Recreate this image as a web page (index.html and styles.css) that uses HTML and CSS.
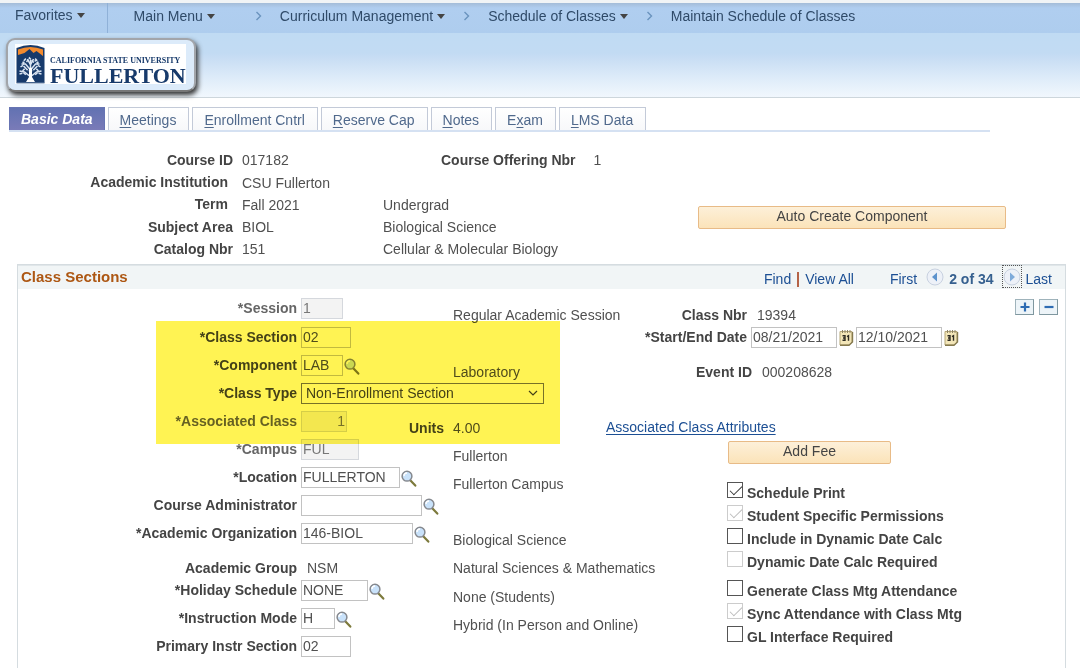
FILE: index.html
```html
<!DOCTYPE html>
<html lang="en">
<head>
    <meta charset="UTF-8">
    <title>Maintain Schedule of Classes</title>
    <link rel="stylesheet" href="styles.css">
</head>
<body>

<!-- shared icons -->
<svg class="icon-defs" width="0" height="0">
    <symbol id="icon-lookup" viewBox="0 0 16 17">
        <path d="M9.5 10.5 14.3 15.6" stroke="#7d7a3c" stroke-width="2.2" stroke-linecap="round"/>
        <circle cx="6" cy="6.2" r="4.9" fill="#c9e2fa" stroke="#85888e" stroke-width="1.5"/>
        <path d="M3 6a3 3 0 0 1 3-3" fill="none" stroke="#fff" stroke-width="1.4"/>
    </symbol>
    <symbol id="icon-calendar" viewBox="0 0 15 17">
        <path d="M1 2.500h12v10.500L10 16H1z" fill="#f3e6b8" stroke="#b5a677"/>
        <path d="M13.500 3v10L10 16.300H1" fill="none" stroke="#85794e" stroke-width="1.400"/>
        <path d="M3.500 1v3M6 1v3M8.500 1v3M11 1v3" stroke="#8d8466"/>
        <path d="M3.500 6.700h2.500v4.600h-2.500M4 9h2M8 7.700l1.500-1v5" fill="none" stroke="#2e2b22" stroke-width="1.400"/>
    </symbol>
    <symbol id="icon-sep" viewBox="0 0 7 10">
        <path d="M1.5 1 5.5 5 1.5 9" fill="none" stroke="#6a93be" stroke-width="1.4"/>
    </symbol>
</svg>

<nav class="breadcrumb">
    <a class="crumb favorites has-menu" href="#">Favorites</a>
    <a class="crumb main-menu has-menu" href="#">Main Menu</a>
    <svg class="sep"><use href="#icon-sep"/></svg>
    <a class="crumb has-menu" href="#">Curriculum Management</a>
    <svg class="sep"><use href="#icon-sep"/></svg>
    <a class="crumb has-menu" href="#">Schedule of Classes</a>
    <svg class="sep"><use href="#icon-sep"/></svg>
    <a class="crumb" href="#">Maintain Schedule of Classes</a>
</nav>

<header class="banner">
    <a class="logo" href="#">
        <span class="logo-inner">
            <svg class="logo-mark" viewBox="0 0 30 40">
                <path d="M1 4Q15-2 29 4v35H1z" fill="#173a6b"/>
                <path d="M2.500 5.500Q15 .5 27.500 5.500V12L21 7l-3 2-4-4-5 4-6.500 2z" fill="#f28a2e"/>
                <g fill="none" stroke="#dbe5f2" stroke-width="1.500">
                    <path d="M15 37V16M14 32l-5-4-5-1M16 32l5-4 5-1M15 26l-5-6-4 0M15 26l5-6 4 0M15 21l-3-6M15 21l3-6"/>
                    <path d="M5 23l3-2 0-4 3-3M7 27l3-3-3-3M11 18l3-4 4 4 3-2M25 23l-3-2 0-4-3-3M23 27l-3-3 3-3M4 30l4-1 3 2M26 30l-4-1-3 2M10 24l3 3M20 24l-3 3M7 18l2 1M23 18l-2 1" stroke-dasharray="3 1"/>
                </g>
                <path d="M13.500 24h3v9l3 5h-9l3-5z" fill="#fff"/>
                <path d="M1 39h28" stroke="#6c86aa"/>
            </svg>
            <span class="logo-text">
                <span class="logo-small">CALIFORNIA STATE UNIVERSITY</span>
                <span class="logo-big">FULLERTON</span>
            </span>
        </span>
    </a>
</header>

<nav class="tabs">
    <a class="tab active" href="#">Basic Data</a>
    <a class="tab" href="#"><u>M</u>eetings</a>
    <a class="tab" href="#"><u>E</u>nrollment Cntrl</a>
    <a class="tab" href="#"><u>R</u>eserve Cap</a>
    <a class="tab" href="#"><u>N</u>otes</a>
    <a class="tab" href="#">E<u>x</u>am</a>
    <a class="tab" href="#"><u>L</u>MS Data</a>
</nav>

<section class="course">
    <dl class="course-info">
        <dt>Course ID</dt>
        <dd>017182</dd>
        <dd class="offering"><b>Course Offering Nbr</b> <span>1</span></dd>
        <dt class="indent">Academic Institution</dt>
        <dd>CSU Fullerton</dd>
        <dd></dd>
        <dt class="indent">Term</dt>
        <dd>Fall 2021</dd>
        <dd>Undergrad</dd>
        <dt>Subject Area</dt>
        <dd>BIOL</dd>
        <dd>Biological Science</dd>
        <dt>Catalog Nbr</dt>
        <dd>151</dd>
        <dd>Cellular &amp; Molecular Biology</dd>
    </dl>
    <button type="button" class="btn btn-wide">Auto Create Component</button>
</section>

<section class="panel">
    <div class="panel-header">
        <h2>Class Sections</h2>
        <div class="pager">
            <a href="#">Find</a>
            <span class="bar"></span>
            <a href="#">View All</a>
            <a class="first" href="#">First</a>
            <button type="button" class="page-btn" aria-label="Previous">
                <svg viewBox="0 0 18 18"><circle cx="9" cy="9" r="8" fill="#edf1f8" stroke="#c8d1e0"/><path d="M11 4.500v9L6 9z" fill="#5d93cd"/></svg>
            </button>
            <b>2 of 34</b>
            <button type="button" class="page-btn focused" aria-label="Next">
                <svg viewBox="0 0 18 18"><circle cx="9" cy="9" r="8" fill="#edf1f8" stroke="#c8d1e0"/><path d="M7 4.500v9L12 9z" fill="#7fabda"/></svg>
            </button>
            <a href="#">Last</a>
        </div>
    </div>

    <form class="panel-body">
        <div class="fields">
            <div class="field">
                <label class="dim" for="session">*Session</label>
                <div class="control"><input type="text" id="session" class="w-s" value="1" disabled></div>
                <span class="desc">Regular Academic Session</span>
            </div>
            <div class="highlight">
                <div class="field">
                    <label for="class-section">*Class Section</label>
                    <div class="control"><input type="text" id="class-section" class="w-m" value="02"></div>
                </div>
                <div class="field">
                    <label for="component">*Component</label>
                    <div class="control">
                        <input type="text" id="component" class="w-s" value="LAB">
                        <button type="button" class="lookup" aria-label="Look up component"><svg><use href="#icon-lookup"/></svg></button>
                    </div>
                    <span class="desc">Laboratory</span>
                </div>
                <div class="field">
                    <label for="class-type">*Class Type</label>
                    <div class="control">
                        <div class="select-wrap">
                            <select id="class-type">
                                <option>Non-Enrollment Section</option>
                                <option>Enrollment Section</option>
                            </select>
                            <svg class="chevron" viewBox="0 0 10 6"><path d="M1 1l4 4 4-4" fill="none" stroke="#444" stroke-width="1.2"/></svg>
                        </div>
                    </div>
                </div>
                <div class="field">
                    <label class="dim" for="assoc-class">*Associated Class</label>
                    <div class="control"><input type="text" id="assoc-class" class="w-a num" value="1" disabled><b class="units">Units</b></div>
                    <span class="desc">4.00</span>
                </div>
            </div>
            <div class="field">
                <label class="dim" for="campus">*Campus</label>
                <div class="control"><input type="text" id="campus" class="w-l" value="FUL" disabled></div>
                <span class="desc">Fullerton</span>
            </div>
            <div class="field">
                <label for="location">*Location</label>
                <div class="control">
                    <input type="text" id="location" class="w-xl" value="FULLERTON">
                    <button type="button" class="lookup" aria-label="Look up location"><svg><use href="#icon-lookup"/></svg></button>
                </div>
                <span class="desc">Fullerton Campus</span>
            </div>
            <div class="field">
                <label for="course-admin">Course Administrator</label>
                <div class="control">
                    <input type="text" id="course-admin" class="w-3xl">
                    <button type="button" class="lookup" aria-label="Look up administrator"><svg><use href="#icon-lookup"/></svg></button>
                </div>
            </div>
            <div class="field">
                <label for="acad-org">*Academic Organization</label>
                <div class="control">
                    <input type="text" id="acad-org" class="w-2xl" value="146-BIOL">
                    <button type="button" class="lookup" aria-label="Look up organization"><svg><use href="#icon-lookup"/></svg></button>
                </div>
                <span class="desc">Biological Science</span>
            </div>
            <div class="field plain">
                <b>Academic Group</b>
                <span class="value">NSM</span>
                <span class="desc">Natural Sciences &amp; Mathematics</span>
            </div>
            <div class="field">
                <label for="holiday">*Holiday Schedule</label>
                <div class="control">
                    <input type="text" id="holiday" class="w-h" value="NONE">
                    <button type="button" class="lookup" aria-label="Look up holiday schedule"><svg><use href="#icon-lookup"/></svg></button>
                </div>
                <span class="desc">None (Students)</span>
            </div>
            <div class="field">
                <label for="mode">*Instruction Mode</label>
                <div class="control">
                    <input type="text" id="mode" class="w-xs" value="H">
                    <button type="button" class="lookup" aria-label="Look up instruction mode"><svg><use href="#icon-lookup"/></svg></button>
                </div>
                <span class="desc">Hybrid (In Person and Online)</span>
            </div>
            <div class="field">
                <label for="primary-section">Primary Instr Section</label>
                <div class="control"><input type="text" id="primary-section" class="w-m" value="02"></div>
            </div>
        </div>

        <div class="side">
            <div class="side-row class-nbr">
                <b>Class Nbr</b>
                <span class="value">19394</span>
                <span class="row-actions">
                    <button type="button" aria-label="Add row"><svg viewBox="0 0 12 12"><path d="M6 1.500v9M1.500 6h9" stroke="#2e6cb3" stroke-width="2.200"/></svg></button>
                    <button type="button" aria-label="Delete row"><svg viewBox="0 0 12 12"><path d="M1.500 6h9" stroke="#2e6cb3" stroke-width="2.200"/></svg></button>
                </span>
            </div>
            <div class="side-row dates">
                <label for="start-date">*Start/End Date</label>
                <span class="date-inputs">
                    <input type="text" id="start-date" value="08/21/2021">
                    <button type="button" class="cal" aria-label="Choose start date"><svg><use href="#icon-calendar"/></svg></button>
                    <input type="text" id="end-date" value="12/10/2021" aria-label="End date">
                    <button type="button" class="cal" aria-label="Choose end date"><svg><use href="#icon-calendar"/></svg></button>
                </span>
            </div>
            <div class="side-row event">
                <b>Event ID</b>
                <span class="value">000208628</span>
            </div>
            <a class="attributes" href="#">Associated Class Attributes</a>
            <div class="options">
                <button type="button" class="btn btn-fee">Add Fee</button>
                <div class="checks">
                    <label><input type="checkbox" checked>Schedule Print</label>
                    <label><input type="checkbox" checked disabled>Student Specific Permissions</label>
                    <label><input type="checkbox">Include in Dynamic Date Calc</label>
                    <label><input type="checkbox" disabled>Dynamic Date Calc Required</label>
                </div>
                <div class="checks">
                    <label><input type="checkbox">Generate Class Mtg Attendance</label>
                    <label><input type="checkbox" checked disabled>Sync Attendance with Class Mtg</label>
                    <label><input type="checkbox">GL Interface Required</label>
                </div>
            </div>
        </div>
    </form>
</section>

</body>
</html>
```
FILE: styles.css
```css
* {
    box-sizing: border-box;
}
body {
    margin: 0;
    background: #fff;
    color: #505050;
    font-family: "Liberation Sans", Arial, sans-serif;
    font-size: 14px;
    line-height: 16px;
}
b, label, dt {
    color: #444;
    font-weight: bold;
}
a {
    color: #1c4f94;
    text-decoration: none;
}
button {
    font: inherit;
    padding: 0;
}
.icon-defs {
    position: absolute;
}

/* breadcrumb bar */
.breadcrumb {
    display: flex;
    align-items: center;
    height: 33px;
    padding-bottom: 5px;
    border-top: 3px solid #f1f4f6;
    background: linear-gradient(#a4bcd8, #b0cef0 5px, #aecdee);
    white-space: nowrap;
}
.crumb {
    color: #2f4a68;
}
.has-menu::after {
    content: "";
    display: inline-block;
    margin-left: 4px;
    vertical-align: 2px;
    border: 4px solid transparent;
    border-top: 5px solid #444;
    border-bottom: 0;
}
.favorites {
    align-self: stretch;
    margin-bottom: -5px;
    padding: 4px 22px 0 15px;
    border-right: 1px solid #8fb1d8;
}
.main-menu {
    margin: 0 22px 0 26px;
}
.sep {
    width: 7px;
    height: 10px;
    margin: 0 18px;
}

/* banner with logo */
.banner {
    height: 65px;
    padding: 5px 6px;
    border-bottom: 1px solid #cdd6dc;
    background: linear-gradient(#c0dbf3, #c2dbf3 20px, #c9def4 26px, #e3effa 50px, #f1f7fd);
}
.logo {
    display: inline-block;
    padding: 4px 8px 6px 7px;
    border: 2px solid #a2a5aa;
    border-bottom-color: #777;
    border-radius: 9px;
    background: #dcebfa;
    box-shadow: 2px 3px 5px #333;
}
.logo-inner {
    display: flex;
    width: 171px;
    height: 40px;
    background: #fff;
}
.logo-mark {
    width: 31px;
    height: 40px;
}
.logo-text {
    display: flex;
    flex-direction: column;
    margin-left: 4px;
    color: #173a6b;
    font-family: "Liberation Serif", serif;
    font-weight: bold;
    white-space: nowrap;
}
.logo-small {
    padding-top: 12px;
    font-size: 8px;
    line-height: 10px;
}
.logo-big {
    font-size: 22px;
    line-height: 20px;
}

/* tabs */
.tabs {
    display: flex;
    gap: 3px;
    margin: 9px 90px 0 9px;
    border-bottom: 2px solid #d5e1f2;
}
.tab {
    height: 23px;
    padding: 3px 12px 0 11px;
    border: 1px solid #c3cad8;
    border-bottom: 0;
    background: linear-gradient(#fff, #f7f8fa);
    color: #50698c;
    line-height: 18px;
}
.tab.active {
    padding: 2px 11px 0;
    border-color: #6774b3;
    background: linear-gradient(#6272b2, #7a7bb8);
    color: #fff;
    font-style: italic;
    font-weight: bold;
}
.tab u {
    text-underline-offset: 2px;
}

/* course summary */
.course {
    display: flex;
    height: 132px;
    padding: 17px 9px 0 0;
}
.course-info {
    display: grid;
    grid-template-columns: 233px 141px 1fr;
    grid-template-rows: 23px;
    grid-auto-rows: 22px;
    flex: 1;
    margin: 0;
    line-height: 22px;
}
.course-info dt {
    text-align: right;
}
.course-info .indent {
    margin-top: -1px;
    padding-right: 5px;
}
.course-info dd {
    margin: 0 0 0 9px;
}
.course-info .offering {
    padding-left: 58px;
}
.offering span {
    margin-left: 14px;
}
.btn {
    height: 23px;
    padding-bottom: 3px;
    border: 1px solid #e8bb87;
    border-radius: 2px;
    background: linear-gradient(#fdf0d9, #fbe3b9);
    color: #444;
}
.btn-wide {
    width: 308px;
    margin: 57px 65px 0 0;
}

/* class sections */
.panel {
    margin: 0 14px 0 17px;
    border: 1px solid #d5dce0;
    border-bottom: 0;
}
.panel-header {
    display: flex;
    align-items: center;
    justify-content: space-between;
    height: 24px;
    padding: 0 13px 0 3px;
    border-top: 1px solid #e0e6e9;
    background: #f1f5f6;
}
.panel-header h2 {
    margin: 0 0 2px;
    color: #ad5713;
    font-size: 15px;
}
.pager {
    display: flex;
    align-items: center;
    padding-top: 3px;
}
.pager b {
    margin: 0 8px 0 5px;
    color: #36608f;
}
.bar {
    width: 2px;
    height: 15px;
    margin: 0 6px;
    background: #b56347;
}
.first {
    margin: 0 9px 0 36px;
}
.page-btn {
    width: 18px;
    height: 23px;
    margin-top: -5px;
    border: 0;
    background: none;
}
.page-btn svg {
    display: block;
    width: 18px;
    height: 18px;
}
.page-btn.focused {
    width: 20px;
    margin-right: 4px;
    border: 1px dotted #555;
}
.panel-body {
    display: grid;
    grid-template-columns: 588px 1fr;
    padding-bottom: 12px;
}

.field {
    display: grid;
    grid-template-columns: 279px 156px 1fr;
    height: 28px;
    padding-top: 4px;
    white-space: nowrap;
}
.field:first-child {
    padding-top: 0;
}
.fields {
    padding-top: 9px;
}
.fields > .field:first-child {
    height: 25px;
}
.field label {
    text-align: right;
    padding-top: 2px;
}
.dim {
    color: #666;
}
.control {
    display: flex;
    align-items: flex-start;
    padding-left: 4px;
}
.desc {
    padding-top: 9px;
}
input[type="text"] {
    height: 21px;
    padding: 0 1px 1px;
    border: 1px solid #c2c2c2;
    background: #fff;
    color: #505050;
    font: inherit;
}
input[type="text"]:disabled {
    border-color: #d5d8dd;
    background: #f3f3f3;
    color: #777;
}
.w-xs { width: 34px; }
.w-s { width: 42px; }
.w-a { width: 46px; }
.w-m { width: 50px; }
.w-l { width: 58px; }
.w-h { width: 67px; }
.w-xl { width: 99px; }
.w-2xl { width: 112px; }
.w-3xl { width: 121px; }
.num {
    text-align: right;
}
.lookup {
    width: 16px;
    height: 17px;
    margin: 3px 0 0 1px;
    border: 0;
    background: none;
}
.lookup svg {
    display: block;
    width: 16px;
    height: 17px;
}
.units {
    margin: 9px 9px 0 auto;
}
.select-wrap {
    position: relative;
}
select {
    width: 243px;
    height: 21px;
    padding: 0 4px 2px;
    border: 1px solid #777;
    border-radius: 0;
    appearance: none;
    background: #fff;
    color: #444;
    font: inherit;
}
.chevron {
    position: absolute;
    top: 7px;
    right: 6px;
    width: 10px;
    height: 6px;
    pointer-events: none;
}

/* marker over the four key rows */
.highlight {
    position: relative;
}
.highlight .field {
    padding-top: 4px;
}
.highlight::after {
    content: "";
    position: absolute;
    top: -2px;
    bottom: -9px;
    left: 138px;
    width: 404px;
    background: #fff353;
    mix-blend-mode: multiply;
    pointer-events: none;
}
.field.plain {
    height: 29px;
    padding-top: 13px;
}
.plain b {
    text-align: right;
}
.plain .value {
    padding-left: 10px;
}
.plain .desc {
    padding-top: 0;
}

/* right-hand side */
.side {
    padding-top: 10px;
}
.side-row {
    display: grid;
    grid-template-columns: 141px 1fr auto;
    white-space: nowrap;
}
.side-row b, .side-row label {
    text-align: right;
}
.side-row .value {
    padding-left: 10px;
}
.class-nbr {
    height: 28px;
}
.class-nbr b, .class-nbr .value {
    padding-top: 8px;
}
.dates label {
    padding-top: 2px;
}
.row-actions {
    display: flex;
    gap: 5px;
    padding-right: 7px;
}
.row-actions button {
    width: 19px;
    height: 16px;
    border: 1px solid #9fb3bb;
    border-right-color: #7f979f;
    border-bottom-color: #7f979f;
    background: #edf4f8;
}
.row-actions svg {
    display: block;
    width: 12px;
    height: 12px;
    margin: 0 auto;
}
.date-inputs {
    display: flex;
    align-items: flex-start;
    padding-left: 4px;
}
.date-inputs input {
    width: 86px;
}
.cal {
    width: 15px;
    height: 17px;
    margin: 2px 2px 0;
    border: 0;
    background: none;
}
.cal svg {
    display: block;
    width: 15px;
    height: 17px;
}
.event {
    grid-template-columns: 146px 1fr;
    margin-top: 16px;
}
.attributes {
    display: inline-block;
    margin-top: 39px;
    text-decoration: underline;
    text-underline-offset: 2px;
}
.options {
    margin: 6px 0 0 121px;
}
.btn-fee {
    display: block;
    width: 163px;
    margin: 0 0 17px 1px;
}
.checks {
    margin-bottom: 6px;
}
.checks label {
    display: flex;
    align-items: flex-start;
    height: 23px;
    padding-top: 4px;
    white-space: nowrap;
}
input[type="checkbox"] {
    width: 16px;
    height: 16px;
    margin: -3px 4px 0 0;
    border: 1px solid #555;
    appearance: none;
    background: #fff;
}
input[type="checkbox"]:disabled {
    border-color: #ccc;
}
input[type="checkbox"]:checked::after {
    content: "";
    display: block;
    width: 11px;
    height: 5px;
    margin: 3px 0 0 2px;
    border: solid #333;
    border-width: 0 0 1px 1px;
    transform: rotate(-45deg);
}
input[type="checkbox"]:checked:disabled::after {
    border-color: #bbb;
}
```
